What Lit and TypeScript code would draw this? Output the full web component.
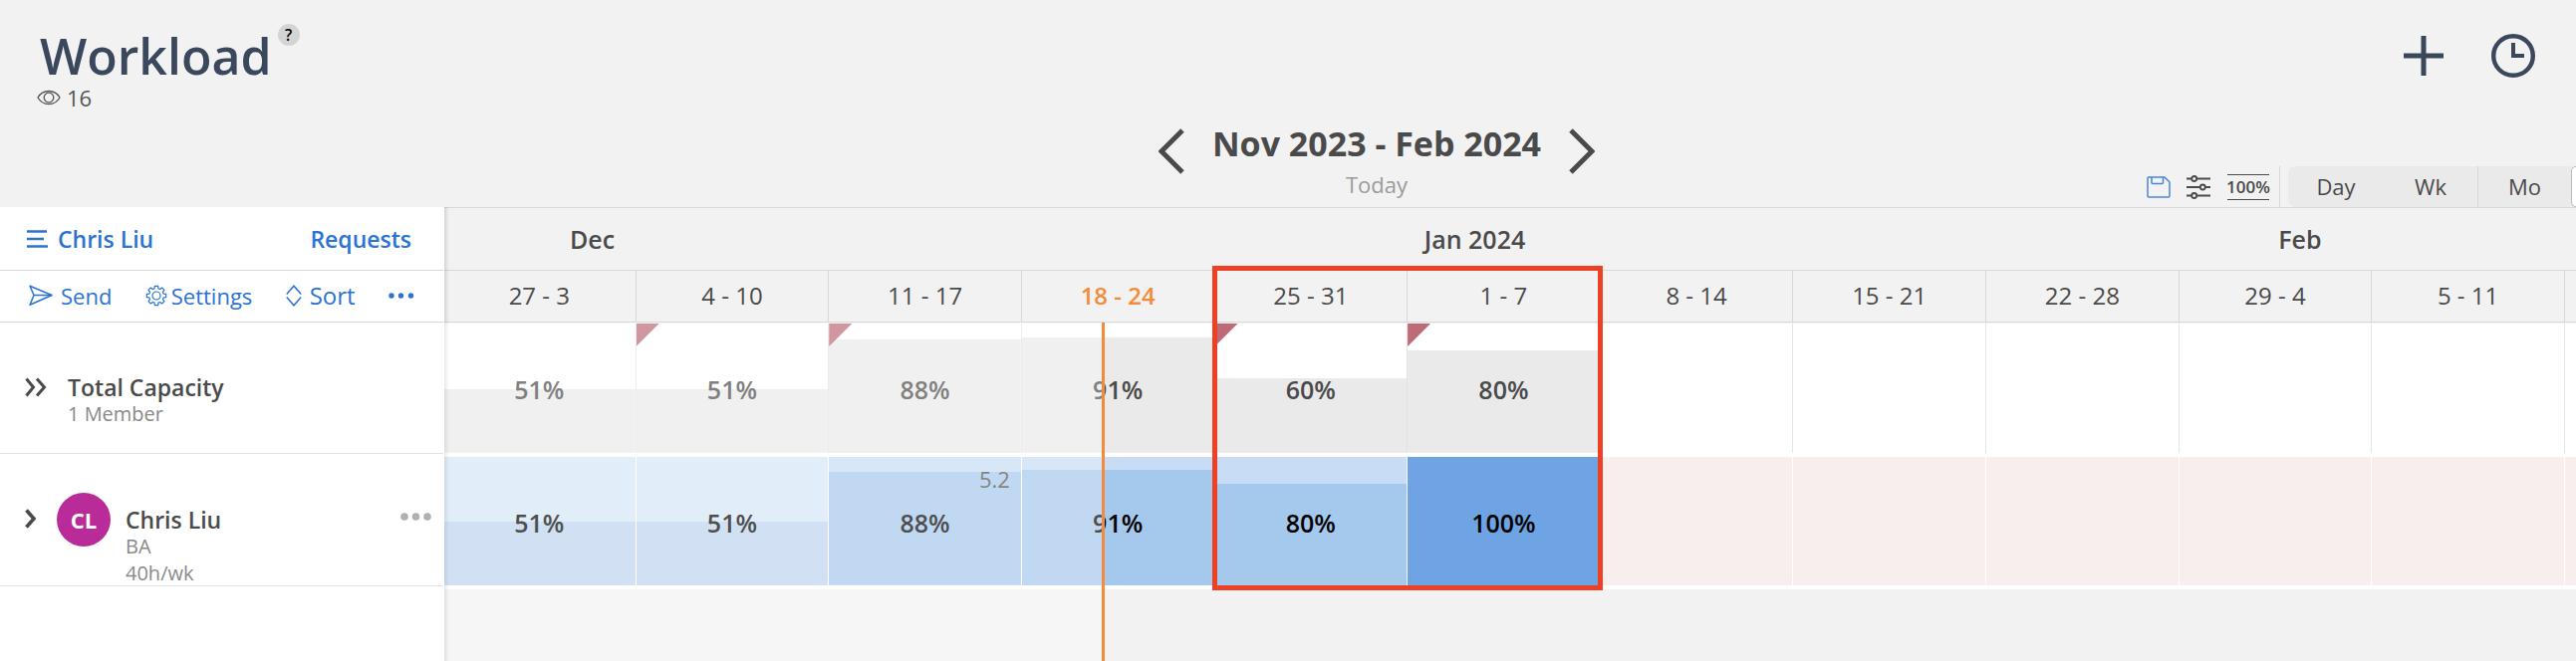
import { LitElement, html, css, svg, nothing } from "lit";
import { customElement } from "lit/decorators.js";
import { classMap } from "lit/directives/class-map.js";
import { styleMap } from "lit/directives/style-map.js";

interface Slot {
  label?: string;
  fill?: number;
  tone?: string;
  flag?: boolean;
  note?: string;
}

const WEEKS = ["27 - 3", "4 - 10", "11 - 17", "18 - 24", "25 - 31", "1 - 7", "8 - 14", "15 - 21", "22 - 28", "29 - 4", "5 - 11", ""];
const CURRENT_WEEK = 3;

const TOTAL: Slot[] = [
  { label: "51%", fill: 49 },
  { label: "51%", fill: 49, flag: true },
  { label: "88%", fill: 88, flag: true },
  { label: "91%", fill: 89 },
  { label: "60%", fill: 58, flag: true },
  { label: "80%", fill: 79, flag: true },
  {}, {}, {}, {}, {}, {},
];

const MEMBER: Slot[] = [
  { label: "51%", fill: 50, tone: "light" },
  { label: "51%", fill: 50, tone: "light" },
  { label: "88%", fill: 88, tone: "medium", note: "5.2" },
  { label: "91%", fill: 90, tone: "medium" },
  { label: "80%", fill: 79, tone: "medium" },
  { label: "100%", fill: 100, tone: "full" },
  {}, {}, {}, {}, {}, {},
];

const gearPath = (() => {
  const pts: string[] = [];
  const teeth = 8;
  for (let i = 0; i < teeth; i++) {
    const a = (i / teeth) * Math.PI * 2;
    for (const [off, r] of [[-0.27, 7.4], [-0.17, 9.8], [0.17, 9.8], [0.27, 7.4]]) {
      pts.push(`${(11 + r * Math.cos(a + off)).toFixed(2)} ${(11 + r * Math.sin(a + off)).toFixed(2)}`);
    }
  }
  return "M" + pts.join("L") + "Z";
})();

const icon = (w: number, h: number, body: unknown) =>
  html`<svg width=${w} height=${h} viewBox="0 0 ${w} ${h}" fill="none" stroke="currentColor" aria-hidden="true">${body}</svg>`;

const icons = {
  eye: icon(24, 16, svg`<path d="M1 8C6 -0.7 18 -0.7 23 8C18 16.7 6 16.7 1 8Z" stroke-width="1.3"/><circle cx="12" cy="8" r="4.8" stroke-width="1.3"/>`),
  plus: icon(40, 40, svg`<path d="M20 0V40M0 20H40" stroke-width="5"/>`),
  clock: icon(44, 44, svg`<circle cx="22" cy="22" r="19.8" stroke-width="4.4"/><path d="M22 9V22H33" stroke-width="4"/>`),
  prev: icon(26, 46, svg`<path d="M24 2L3 23L24 44" stroke-width="5"/>`),
  next: icon(26, 46, svg`<path d="M2 2L23 23L2 44" stroke-width="5"/>`),
  save: icon(24, 22, svg`<path d="M1 2a1 1 0 0 1 1-1H18L23 6V20a1 1 0 0 1-1 1H2a1 1 0 0 1-1-1Z" stroke-width="1.5"/><path d="M5 1V6.5a1 1 0 0 0 1 1H15.500a1 1 0 0 0 1-1V1" stroke-width="1.5"/>`),
  sliders: icon(24, 24, svg`<path d="M0 3.500H5M10.500 3.500H24M0 12H13.500M19 12H24M0 20.500H5M10.500 20.500H24" stroke-width="1.8"/><circle cx="7.700" cy="3.500" r="2.500" stroke-width="1.8"/><circle cx="16.300" cy="12" r="2.500" stroke-width="1.8"/><circle cx="7.700" cy="20.500" r="2.500" stroke-width="1.8"/>`),
  menu: icon(22, 18, svg`<path d="M0 1.500H20M0 9H17M0 16.500H21" stroke-width="2.600"/>`),
  send: icon(24, 22, svg`<path d="M1 1.200L23 10.500L1 20.300L5 10.500Z" stroke-width="1.500" stroke-linejoin="round"/><path d="M5 10.500H23" stroke-width="1.500"/>`),
  gear: icon(22, 22, svg`<path d=${gearPath} stroke-width="1.200" stroke-linejoin="round"/><circle cx="11" cy="11" r="4" stroke-width="1.200"/>`),
  sort: icon(16, 22, svg`<path d="M0.800 9.500L8 1.200L15.200 9.500M0.800 12.500L8 20.800L15.200 12.500" stroke-width="1.500"/>`),
  dots: icon(26, 6, svg`<g fill="currentColor" stroke="none"><circle cx="3" cy="3" r="2.700"/><circle cx="12.500" cy="3" r="2.700"/><circle cx="22.500" cy="3" r="2.700"/></g>`),
  rowDots: icon(32, 8, svg`<g fill="currentColor" stroke="none"><circle cx="4" cy="4" r="3.800"/><circle cx="15.500" cy="4" r="3.800"/><circle cx="27" cy="4" r="3.800"/></g>`),
  expandAll: icon(22, 20, svg`<path d="M1.500 1.500L8.500 10L1.500 18.500M12 1.500L19.500 10L12 18.500" stroke-width="3"/>`),
  expand: icon(22, 20, svg`<path d="M1.500 1.500L9 10L1.500 18.500" stroke-width="3.600"/>`),
};

@customElement("app-root")
export class AppRoot extends LitElement {
  static styles = css`
    :host {
      --side: 445px;
      --tail: 11px;
      --week: calc((100% - var(--side) - var(--tail)) / 11);
      --line: #d8d8d8;
      --ink: #4a4a4a;
      --link: #2a73d2;
      display: flex;
      flex-direction: column;
      min-height: 100vh;
      overflow: hidden;
      background: #f2f2f2;
      color: var(--ink);
      font-family: "Open Sans", "Noto Sans", sans-serif;
      font-size: 24px;
      line-height: 28px;
    }
    * { box-sizing: border-box; }
    svg { display: block; flex: none; }
    button, a {
      display: flex;
      align-items: center;
      margin: 0;
      padding: 0;
      border: 0;
      background: none;
      color: inherit;
      font: inherit;
      text-decoration: none;
      white-space: nowrap;
      cursor: pointer;
    }

    .masthead {
      display: flex;
      justify-content: space-between;
      align-items: flex-start;
      height: 124px;
      padding: 26px 41px 0 37px;
    }
    .title { display: flex; align-items: flex-start; gap: 6px; }
    h1 {
      margin: 0;
      padding-left: 3px;
      color: #3a475d;
      font-size: 50px;
      font-weight: 600;
      line-height: 60px;
    }
    .help {
      justify-content: center;
      width: 22px;
      height: 22px;
      margin-top: -2px;
      border-radius: 50%;
      background: #d4d4d4;
      color: #000;
      font-size: 16px;
      font-weight: 600;
      line-height: 20px;
    }
    .views {
      display: flex;
      align-items: center;
      gap: 6px;
      color: #555;
      font-size: 22px;
      line-height: 24px;
    }
    .actions { display: flex; align-items: center; gap: 48px; padding-top: 8px; color: #3a475d; }

    .period {
      display: grid;
      grid-template-columns: 1fr auto 1fr;
      height: 84px;
      padding-left: 178px;
    }
    .range { grid-column: 2; display: flex; align-items: flex-start; gap: 28px; }
    .step { padding-top: 5px; }
    .current { display: flex; flex-direction: column; align-items: center; gap: 9px; }
    h2 { margin: 0; font-size: 34px; font-weight: 700; line-height: 40px; white-space: nowrap; }
    .today { color: #9b9b9b; font-size: 22px; line-height: 24px; }

    .tools { display: flex; align-items: center; justify-content: flex-end; align-self: end; height: 41px; }
    .save { margin-right: 16px; color: #4a86e0; }
    .filter { margin-right: 17px; }
    .scale {
      justify-content: center;
      width: 42px;
      height: 26px;
      margin-right: 10px;
      border-top: 1px solid var(--ink);
      border-bottom: 1px solid var(--ink);
      font-size: 17px;
      font-weight: 600;
      line-height: 24px;
    }
    .zoom {
      display: flex;
      height: 41px;
      padding-left: 8px;
      border-left: 1px solid var(--line);
      font-size: 22px;
    }
    .zoom button { justify-content: center; width: 94px; padding-bottom: 2px; background: #eaeaea; }
    .zoom .first { width: 96px; border-radius: 8px 0 0 8px; }
    .zoom .split { border-left: 1px solid var(--line); }
    .zoom .chosen {
      width: 5px;
      border: 1px solid #bbb;
      border-right: 0;
      border-radius: 8px 0 0 8px;
      background: #fff;
    }

    .board {
      position: relative;
      flex: 1;
      background: linear-gradient(to right, #fff var(--side), #f2f2f2 var(--side));
    }
    table { width: 100%; table-layout: fixed; border-collapse: separate; border-spacing: 0; }
    th, td { padding: 0; font-weight: 400; text-align: left; vertical-align: top; }
    .c-side { width: var(--side); }
    .c-tail { width: var(--tail); }

    .months th { height: 64px; border-bottom: 1px solid var(--line); vertical-align: middle; }
    .months .scale-head { border-top: 1px solid var(--line); font-size: 25px; font-weight: 600; }
    .spans { display: flex; text-align: center; padding-bottom: 1px; }
    .dec { flex: 299; }
    .jan { flex: 1472; }
    .feb { flex: 184; }
    .rest { flex: 185; }
    .owner {
      display: flex;
      align-items: center;
      justify-content: space-between;
      padding: 0 32px 0 27px;
      color: var(--link);
      font-size: 23px;
      font-weight: 600;
    }
    .owner button { gap: 9px; }

    .weeks th { height: 52px; padding-bottom: 2px; border-bottom: 1px solid var(--line); vertical-align: middle; }
    .weeks .week { border-right: 1px solid var(--line); text-align: center; }
    .weeks .week:last-child { border-right: 0; }
    .weeks .now { color: #f28c3c; font-weight: 600; }
    .bar {
      display: flex;
      align-items: center;
      justify-content: space-between;
      padding: 0 29px;
      color: var(--link);
      font-size: 22px;
    }
    .bar button { gap: 8px; }
    .bar .tight { gap: 4px; }
    .bar .sort { font-size: 24px; }

    .person { background: #fff; }
    .info {
      display: flex;
      align-items: flex-start;
      padding: 52px 11px 0 25px;
      height: 132px;
      border-bottom: 1px solid #e2e2e2;
    }
    .member .info { height: 130px; padding-top: 50px; }
    .total .open { height: 26px; margin-right: 21px; }
    .member .open { margin-right: 10px; height: 18px; padding-top: 6px; }
    .avatar {
      display: flex;
      align-items: center;
      justify-content: center;
      width: 54px;
      height: 54px;
      margin: -14px 15px 0 0;
      border-radius: 50%;
      background: #b92b98;
      color: #fff;
      font-size: 22px;
      font-weight: 700;
    }
    .names { flex: 1; }
    .name { font-size: 23px; font-weight: 600; line-height: 26px; }
    .sub { color: #8a8a8a; font-size: 20px; line-height: 27px; }
    .more { padding-top: 6px; color: #b0b0b0; }

    .cell { background: #fff; border-bottom: 4px solid #fff; }
    .total .cell { border-top: 1px solid #f2f2f2; }
    .lane {
      --bar: #eaeaea;
      position: relative;
      display: flex;
      align-items: center;
      justify-content: center;
      height: 129px;
      padding-top: 2px;
      border-right: 1px solid #fff;
      background: linear-gradient(var(--bar), var(--bar)) bottom / 100% var(--fill, 0) no-repeat;
      background-color: #f8eeed;
      color: #000;
      font-size: 25px;
      font-weight: 600;
    }
    .total .lane { height: 130px; border-right-color: #e4e4e4; background-color: #fff; color: var(--ink); }
    .cell:last-child .lane { border-right: 0; }
    .member .light { --bar: #bdd4ee; background-color: #d4e5f6; }
    .member .medium { --bar: #a5c8ed; background-color: #c8ddf5; }
    .member .full { --bar: #6ea4e3; }
    .flag::before {
      content: "";
      position: absolute;
      left: 0;
      top: 0;
      width: 23px;
      height: 23px;
      background: #be6b77;
      clip-path: polygon(0 0, 100% 0, 0 100%);
    }
    .note {
      position: absolute;
      top: 8px;
      right: 11px;
      color: #505050;
      font-size: 22px;
      font-weight: 400;
    }

    .shade, .past, .marker { position: absolute; bottom: 0; left: var(--side); pointer-events: none; }
    .shade { top: 0; width: 6px; background: linear-gradient(to right, #fff 1px, rgba(0, 0, 0, 0.12) 1px, rgba(0, 0, 0, 0)); }
    .past { top: 116px; width: calc(var(--week) * 3.43); background: rgba(255, 255, 255, 0.3); border-right: 3px solid #f28c3c; background-clip: padding-box; }
    .marker {
      top: 59px;
      bottom: auto;
      left: calc(var(--side) + var(--week) * 4 - 3px);
      width: calc(var(--week) * 2 + 5px);
      height: 326px;
      border: 5px solid #ee4025;
    }
  `;

  private renderSlots(slots: Slot[]) {
    return slots.map(
      (s) => html`<td class="cell">
        <div
          class=${classMap({ lane: true, flag: !!s.flag, light: s.tone === "light", medium: s.tone === "medium", full: s.tone === "full" })}
          style=${styleMap(s.fill ? { "--fill": `${s.fill}%` } : {})}
        >${s.label ?? nothing}${s.note ? html`<span class="note">${s.note}</span>` : nothing}</div>
      </td>`,
    );
  }

  render() {
    return html`
      <header>
        <div class="masthead">
          <div>
            <div class="title">
              <h1>Workload</h1>
              <button class="help" aria-label="Help">?</button>
            </div>
            <div class="views">${icons.eye}<span>16</span></div>
          </div>
          <div class="actions">
            <button aria-label="Add">${icons.plus}</button>
            <button aria-label="History">${icons.clock}</button>
          </div>
        </div>
        <div class="period">
          <div class="range">
            <button class="step" aria-label="Previous period">${icons.prev}</button>
            <div class="current">
              <h2>Nov 2023 - Feb 2024</h2>
              <button class="today">Today</button>
            </div>
            <button class="step" aria-label="Next period">${icons.next}</button>
          </div>
          <div class="tools">
            <button class="save" aria-label="Save">${icons.save}</button>
            <button class="filter" aria-label="Filters">${icons.sliders}</button>
            <button class="scale">100%</button>
            <div class="zoom">
              <button class="first">Day</button>
              <button>Wk</button>
              <button class="split">Mo</button>
              <button class="chosen" aria-label="Quarter"></button>
            </div>
          </div>
        </div>
      </header>

      <main class="board">
        <table>
          <colgroup>
            <col class="c-side" />
            <col span="11" />
            <col class="c-tail" />
          </colgroup>
          <thead>
            <tr class="months">
              <th>
                <div class="owner">
                  <button>${icons.menu}<span>Chris Liu</span></button>
                  <a href="#requests">Requests</a>
                </div>
              </th>
              <th class="scale-head" colspan="12">
                <div class="spans">
                  <span class="dec">Dec</span><span class="jan">Jan 2024</span><span class="feb">Feb</span><span class="rest"></span>
                </div>
              </th>
            </tr>
            <tr class="weeks">
              <th>
                <div class="bar">
                  <button>${icons.send}<span>Send</span></button>
                  <button class="tight">${icons.gear}<span>Settings</span></button>
                  <button class="sort">${icons.sort}<span>Sort</span></button>
                  <button aria-label="More">${icons.dots}</button>
                </div>
              </th>
              ${WEEKS.map((w, i) => html`<th class=${classMap({ week: true, now: i === CURRENT_WEEK })}>${w}</th>`)}
            </tr>
          </thead>
          <tbody>
            <tr class="total">
              <th class="person">
                <div class="info">
                  <button class="open" aria-label="Expand all">${icons.expandAll}</button>
                  <div class="names">
                    <div class="name">Total Capacity</div>
                    <div class="sub">1 Member</div>
                  </div>
                </div>
              </th>
              ${this.renderSlots(TOTAL)}
            </tr>
            <tr class="member">
              <th class="person">
                <div class="info">
                  <button class="open" aria-label="Expand">${icons.expand}</button>
                  <span class="avatar">CL</span>
                  <div class="names">
                    <div class="name">Chris Liu</div>
                    <div class="sub">BA</div>
                    <div class="sub">40h/wk</div>
                  </div>
                  <button class="more" aria-label="Member options">${icons.rowDots}</button>
                </div>
              </th>
              ${this.renderSlots(MEMBER)}
            </tr>
          </tbody>
        </table>
        <div class="shade"></div>
        <div class="past"></div>
        <div class="marker"></div>
      </main>
    `;
  }
}
